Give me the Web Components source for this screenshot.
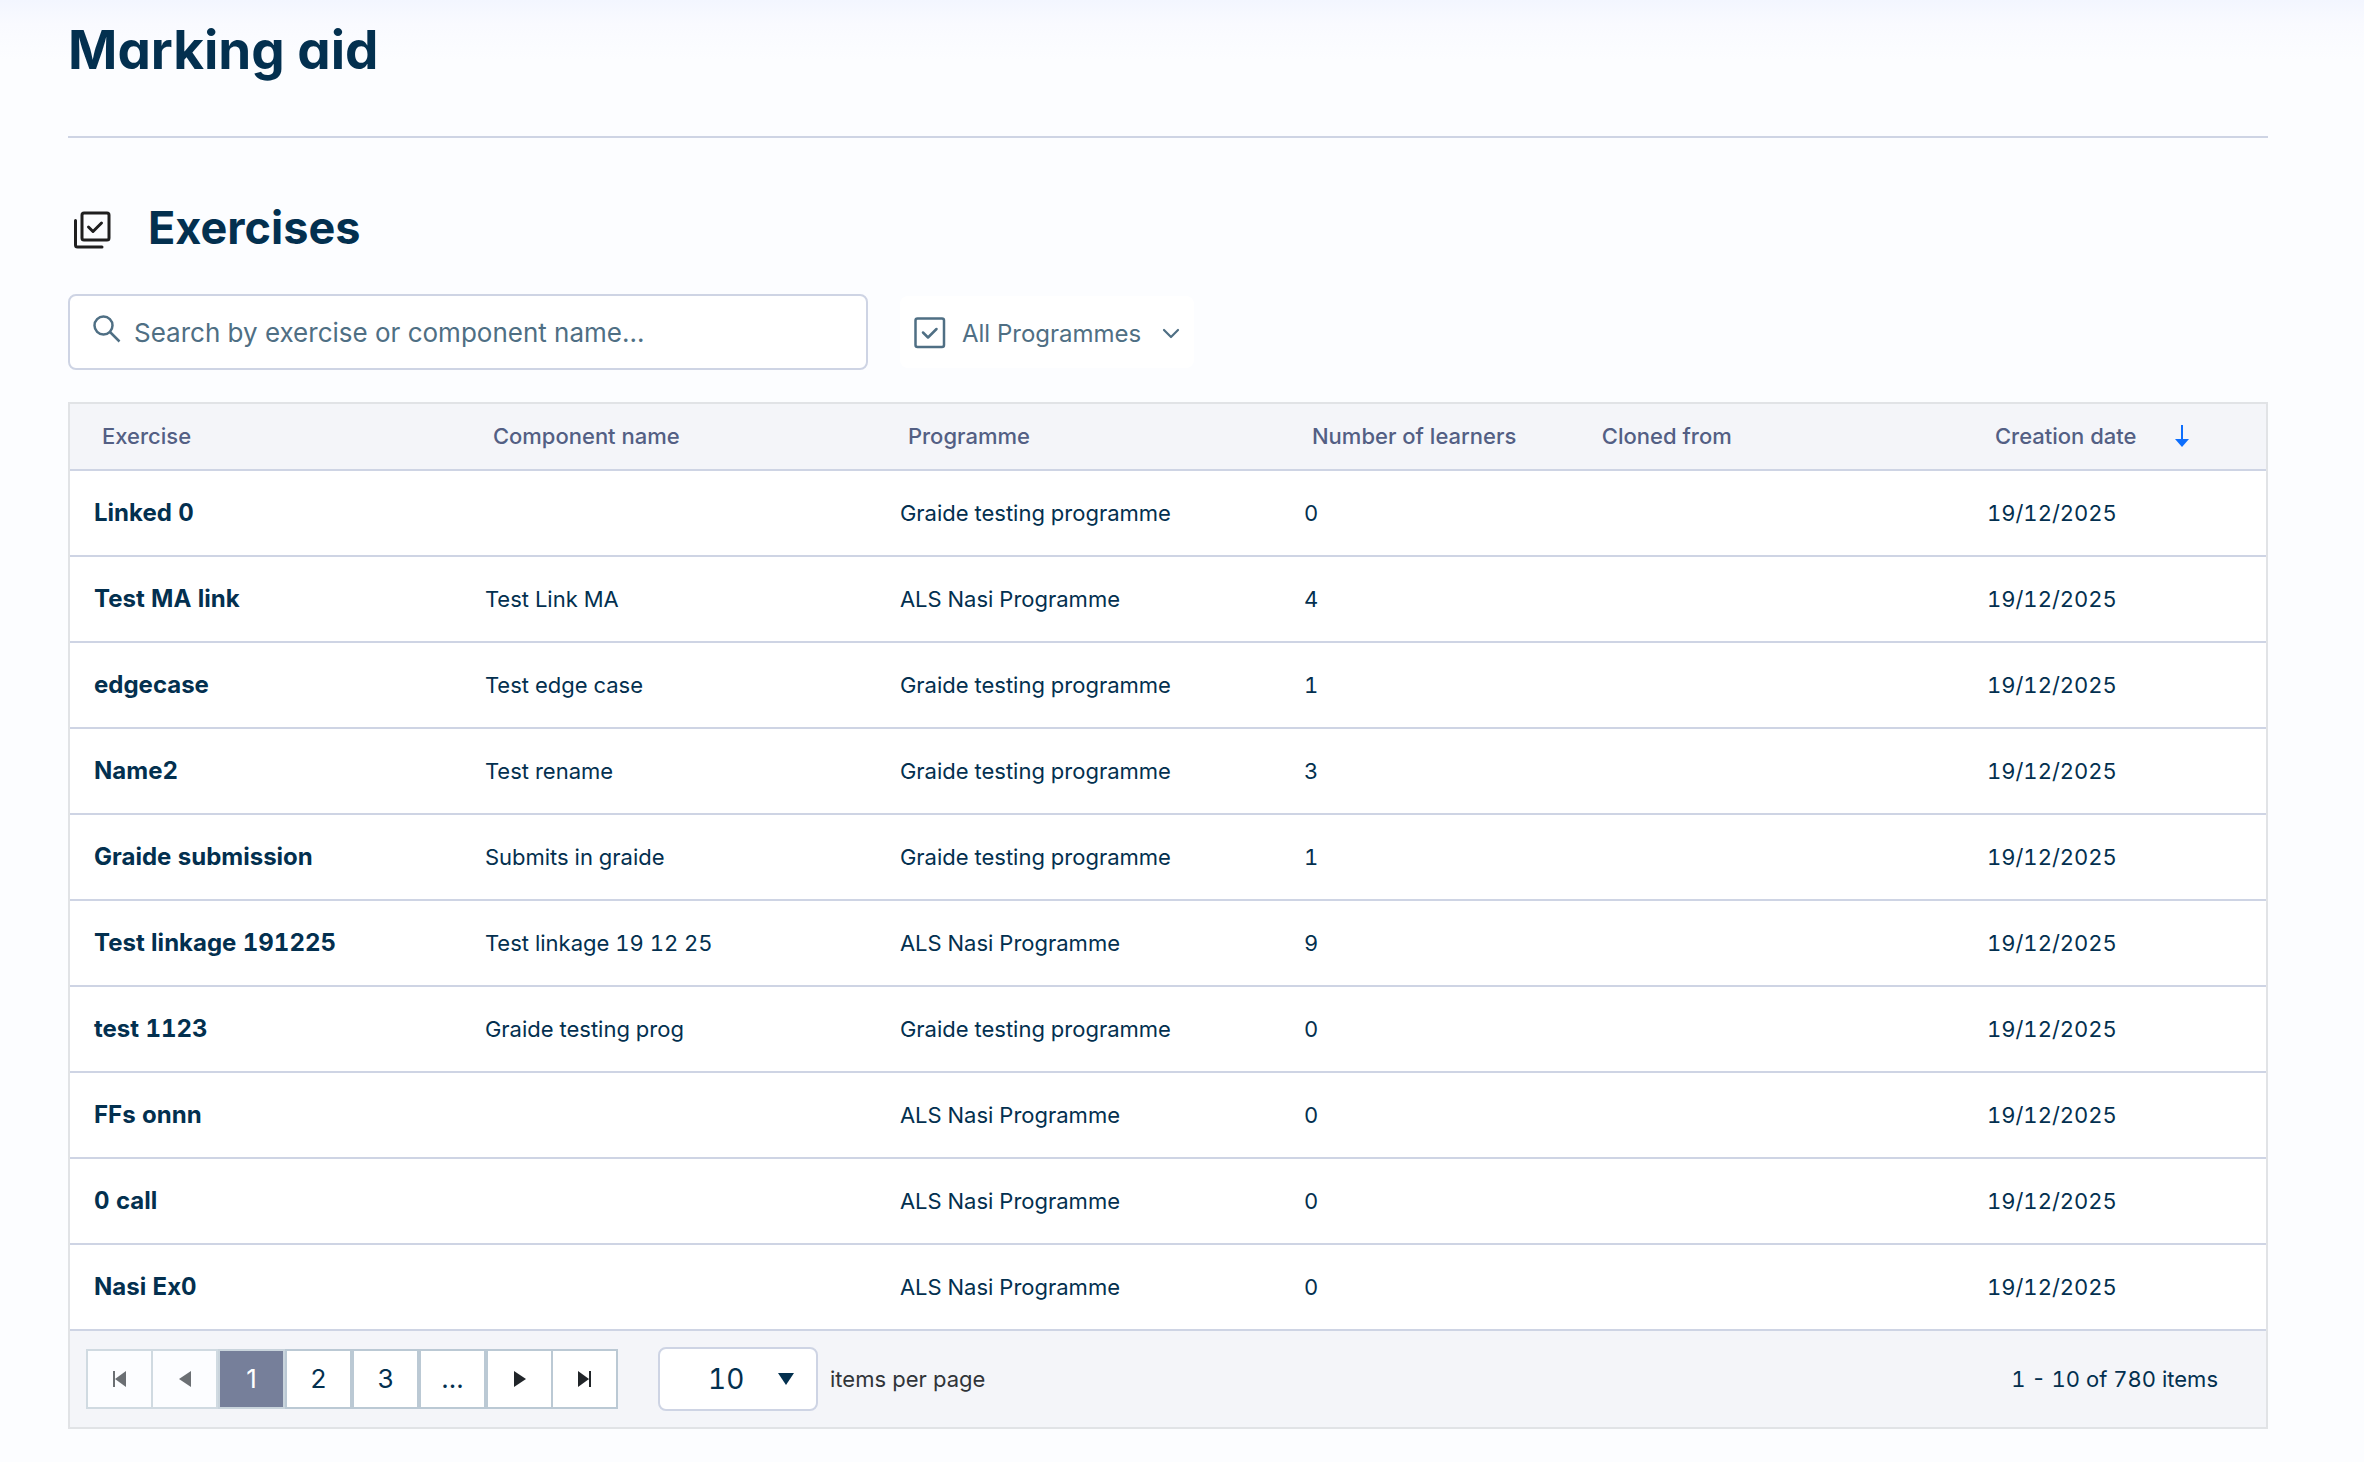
<!DOCTYPE html>
<html lang="en">
<head>
<meta charset="utf-8">
<title>Marking aid</title>
<meta name="viewport" content="width=device-width, initial-scale=1">
<style>
  body {
    margin: 0;
    min-height: 100vh;
    background: linear-gradient(#f3f6ff, #f9faff 24px, #fcfdff 60px) #fcfdff;
    color: #03304f;
    font-family: Inter, "Liberation Sans", sans-serif;
    font-size: 22px;
    line-height: 32px;
  }
</style>
</head>
<body>
<marking-page heading="Marking aid">
  <section-title>Exercises</section-title>
  <filter-bar>
    <search-box placeholder="Search by exercise or component name..."></search-box>
    <programme-filter></programme-filter>
  </filter-bar>
  <exercise-grid>
    <grid-pager slot="pager" total="780"></grid-pager>
  </exercise-grid>
</marking-page>

<script>
const exercises = [
  ["Linked 0", "", "Graide testing programme", 0],
  ["Test MA link", "Test Link MA", "ALS Nasi Programme", 4],
  ["edgecase", "Test edge case", "Graide testing programme", 1],
  ["Name2", "Test rename", "Graide testing programme", 3],
  ["Graide submission", "Submits in graide", "Graide testing programme", 1],
  ["Test linkage 191225", "Test linkage 19 12 25", "ALS Nasi Programme", 9],
  ["test 1123", "Graide testing prog", "Graide testing programme", 0],
  ["FFs onnn", "", "ALS Nasi Programme", 0],
  ["0 call", "", "ALS Nasi Programme", 0],
  ["Nasi Ex0", "", "ALS Nasi Programme", 0],
];

function render(host, html) {
  const template = document.createElement("template");
  template.innerHTML = html;
  host.attachShadow({ mode: "open" }).appendChild(template.content.cloneNode(true));
}

class MarkingPage extends HTMLElement {
  connectedCallback() {
    render(this, `
<style>
:host {
  display: block;
  padding: 18px 96px 32px 68px;
}
h1 {
  margin: 0;
  padding-bottom: 54px;
  border-bottom: 2px solid #ced4e4;
  font-size: 53px;
  line-height: 64px;
  font-weight: 700;
  font-feature-settings: "cv11";
}
</style>
<h1>${this.getAttribute("heading")}</h1>
<main><slot></slot></main>`);
  }
}

class SectionTitle extends HTMLElement {
  connectedCallback() {
    render(this, `
<style>
:host {
  display: flex;
  align-items: center;
  gap: 32px;
  padding: 64px 0 40px 4px;
}
svg {
  width: 44px;
  height: 52px;
}
h2 {
  margin: 0;
  font-size: 45px;
  line-height: 52px;
  font-weight: 700;
  font-feature-settings: "cv11";
}
</style>
<svg viewBox="0 -7 44 52" fill="none" stroke="#1f1f1f" stroke-width="3" stroke-linecap="round" stroke-linejoin="round" aria-hidden="true">
  <rect x="10" y="4" width="27" height="27" rx="2"/>
  <path d="M16.500 18l4.500 4.500 8.500-8.500M3.500 11.500V36q0 2 2 2H30"/>
</svg>
<h2><slot></slot></h2>`);
  }
}

class FilterBar extends HTMLElement {
  connectedCallback() {
    render(this, `
<style>
:host {
  display: flex;
  align-items: center;
  gap: 32px;
  margin-bottom: 32px;
}
::slotted(search-box) {
  flex: 0 1 800px;
}
</style>
<slot></slot>`);
  }
}

class SearchBox extends HTMLElement {
  connectedCallback() {
    render(this, `
<style>
:host {
  display: block;
}
label {
  display: flex;
  gap: 13px;
  box-sizing: border-box;
  height: 76px;
  padding: 0 23px;
  border: 2px solid #ced4e4;
  border-radius: 8px;
  background: #fff;
}
svg {
  flex: none;
  width: 28px;
  height: 28px;
  margin-top: 19px;
}
input {
  flex: 1;
  min-width: 0;
  padding: 2px 0 0;
  border: 0;
  outline: 0;
  background: none;
  color: #03304f;
  font: 26px/36px Inter, "Liberation Sans", sans-serif;
}
input::placeholder {
  color: #4f6f84;
  opacity: 1;
}
</style>
<label>
  <svg viewBox="0 0 28 28" fill="none" stroke="#4f6f84" stroke-width="2.500" aria-hidden="true">
    <circle cx="10.500" cy="10.500" r="9"/>
    <path d="M17 17l9.500 9.500"/>
  </svg>
  <input type="text" aria-label="Search" placeholder="${this.getAttribute("placeholder")}">
</label>`);
  }
}

class ProgrammeFilter extends HTMLElement {
  connectedCallback() {
    render(this, `
<style>
:host {
  display: block;
  position: relative;
}
select {
  appearance: none;
  display: block;
  height: 72px;
  padding: 3px 52px 0 62px;
  border: 0;
  border-radius: 8px;
  background: #fff;
  color: #4f6f84;
  font: 24px/32px Inter, "Liberation Sans", sans-serif;
}
svg {
  position: absolute;
  pointer-events: none;
}
.check {
  left: 14px;
  top: 21px;
  width: 32px;
  height: 32px;
}
.chevron {
  right: 14px;
  top: 32px;
  width: 18px;
  height: 12px;
}
</style>
<select aria-label="Programmes"><option>All Programmes</option></select>
<svg class="check" viewBox="0 0 32 32" fill="none" stroke="#4f6f84" stroke-width="2.500" stroke-linecap="round" stroke-linejoin="round" aria-hidden="true">
  <rect x="1.500" y="1.500" width="28.500" height="28.500" rx="2"/>
  <path d="M9 15.500l5 5 8.500-8.500"/>
</svg>
<svg class="chevron" viewBox="0 0 18 12" fill="none" stroke="#4f6f84" stroke-width="2.200" stroke-linecap="round" stroke-linejoin="round" aria-hidden="true">
  <path d="M2 2l7 7 7-7"/>
</svg>`);
  }
}

class ExerciseGrid extends HTMLElement {
  connectedCallback() {
    const rows = exercises.map(([name, component, programme, learners]) => `
  <tr>
    <th scope="row">${name}</th>
    <td>${component}</td>
    <td>${programme}</td>
    <td>${learners}</td>
    <td></td>
    <td>19/12/2025</td>
  </tr>`).join("");

    render(this, `
<style>
:host {
  display: block;
  border: 2px solid #e1e3e6;
  background: #fff;
}
table {
  width: 100%;
  table-layout: fixed;
  border-collapse: separate;
  border-spacing: 0;
  font-variant-numeric: tabular-nums;
}
th, td {
  height: 84px;
  padding: 0 24px;
  border-bottom: 2px solid #ced4e4;
  text-align: left;
  white-space: nowrap;
}
tbody th {
  font-size: 24px;
  font-weight: 700;
}
thead th {
  height: 63px;
  padding: 0 32px 2px;
  background: #f4f5f9;
  color: #535f84;
  font-weight: 500;
}
.sorted {
  display: flex;
  align-items: center;
  gap: 38px;
}
svg {
  width: 14px;
  height: 22px;
}
</style>
<table>
  <colgroup>
    <col style="width: 17.8%">
    <col style="width: 18.9%">
    <col style="width: 18.4%">
    <col style="width: 13.2%">
    <col style="width: 17.9%">
    <col style="width: 13.8%">
  </colgroup>
  <thead>
    <tr>
      <th scope="col">Exercise</th>
      <th scope="col">Component name</th>
      <th scope="col">Programme</th>
      <th scope="col">Number of learners</th>
      <th scope="col">Cloned from</th>
      <th scope="col" aria-sort="descending">
        <span class="sorted">Creation date
          <svg viewBox="0 0 14 22" fill="#0d6efd" aria-hidden="true"><path d="M6 0h2v14h6l-7 8-7-8h6z"/></svg>
        </span>
      </th>
    </tr>
  </thead>
  <tbody>${rows}</tbody>
</table>
<slot name="pager"></slot>`);
  }
}

class GridPager extends HTMLElement {
  connectedCallback() {
    render(this, `
<style>
:host {
  display: flex;
  align-items: center;
  height: 96px;
  padding: 0 48px 0 16px;
  background: #f4f5f9;
}
nav {
  display: flex;
  margin-right: 40px;
}
button {
  display: flex;
  align-items: center;
  justify-content: center;
  box-sizing: border-box;
  width: 67px;
  height: 60px;
  padding: 0;
  border: 2px solid #bbc9d4;
  background: #fff;
  color: #03304f;
  font: 26px/32px Inter, "Liberation Sans", sans-serif;
}
button:disabled {
  border-color: #d0dae1;
  background: #fcfdff;
}
.joined {
  margin-left: -2px;
}
.current {
  border-color: #c9d4dc;
  background: #767f9a;
  color: #fff;
}
nav svg {
  width: 16px;
  height: 16px;
  fill: #212529;
}
button:disabled svg {
  fill: #6b6f73;
}
.size {
  position: relative;
  margin-right: 12px;
}
select {
  appearance: none;
  display: block;
  box-sizing: border-box;
  width: 160px;
  height: 64px;
  padding: 0 48px;
  border: 2px solid #ced4e4;
  border-radius: 8px;
  background: #fff;
  color: #03304f;
  font: 28px/36px Inter, "Liberation Sans", sans-serif;
  font-variant-numeric: tabular-nums;
}
.size svg {
  position: absolute;
  right: 24px;
  top: 26px;
  width: 16px;
  height: 12px;
  fill: #03304f;
  pointer-events: none;
}
label {
  color: #303438;
}
.info {
  margin-left: auto;
  font-variant-numeric: tabular-nums;
}
</style>
<nav aria-label="Pages">
  <button disabled aria-label="First page"><svg viewBox="0 0 16 16"><path d="M1 0h2v16H1zM14 0v16L3 8z"/></svg></button>
  <button disabled class="joined" aria-label="Previous page"><svg viewBox="0 0 16 16"><path d="M14 0v16L2 8z"/></svg></button>
  <button class="current" aria-current="page">1</button>
  <button>2</button>
  <button>3</button>
  <button>...</button>
  <button aria-label="Next page"><svg viewBox="0 0 16 16"><path d="M2 0v16l12-8z"/></svg></button>
  <button class="joined" aria-label="Last page"><svg viewBox="0 0 16 16"><path d="M1 0v16l11-8zM12 0h2v16h-2z"/></svg></button>
</nav>
<div class="size">
  <select id="size"><option>10</option></select>
  <svg viewBox="0 0 16 12" aria-hidden="true"><path d="M0 0h16L8 12z"/></svg>
</div>
<label for="size">items per page</label>
<span class="info">1 - 10 of ${this.getAttribute("total")} items</span>`);
  }
}

customElements.define("marking-page", MarkingPage);
customElements.define("section-title", SectionTitle);
customElements.define("filter-bar", FilterBar);
customElements.define("search-box", SearchBox);
customElements.define("programme-filter", ProgrammeFilter);
customElements.define("exercise-grid", ExerciseGrid);
customElements.define("grid-pager", GridPager);
</script>
</body>
</html>
